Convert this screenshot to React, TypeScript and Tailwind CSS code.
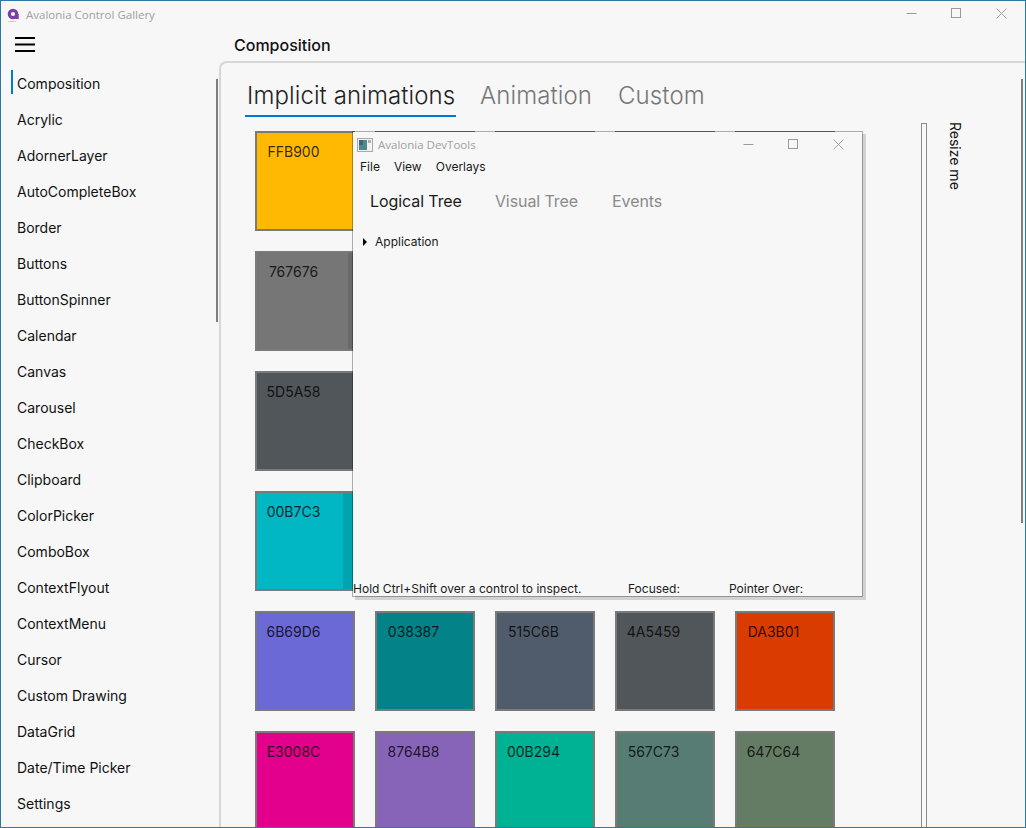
import React from "react";

const navItems = [
  "Composition",
  "Acrylic",
  "AdornerLayer",
  "AutoCompleteBox",
  "Border",
  "Buttons",
  "ButtonSpinner",
  "Calendar",
  "Canvas",
  "Carousel",
  "CheckBox",
  "Clipboard",
  "ColorPicker",
  "ComboBox",
  "ContextFlyout",
  "ContextMenu",
  "Cursor",
  "Custom Drawing",
  "DataGrid",
  "Date/Time Picker",
  "Settings",
];

type Swatch = { label: string; fill: string; strip?: string };

// the empty labels sit under the DevTools window
const swatches: Swatch[] = [
  { label: "FFB900", fill: "bg-[#ffb900]" },
  { label: "", fill: "bg-[#e74856]" },
  { label: "", fill: "bg-[#0078d7]" },
  { label: "", fill: "bg-[#0099bc]" },
  { label: "", fill: "bg-[#7a7574]" },
  { label: "767676", fill: "bg-[#767676]", strip: "w-[5px]" },
  { label: "", fill: "bg-[#ff8c00]" },
  { label: "", fill: "bg-[#e81123]" },
  { label: "", fill: "bg-[#0063b1]" },
  { label: "", fill: "bg-[#2d7d9a]" },
  { label: "5D5A58", fill: "bg-[#50565a]" },
  { label: "", fill: "bg-[#f7630c]" },
  { label: "", fill: "bg-[#ea005e]" },
  { label: "", fill: "bg-[#8e8cd8]" },
  { label: "", fill: "bg-[#00b7c3]" },
  { label: "00B7C3", fill: "bg-[#00b7c3]", strip: "w-[10px]" },
  { label: "", fill: "bg-[#ca5010]" },
  { label: "", fill: "bg-[#c30052]" },
  { label: "", fill: "bg-[#0078d7]" },
  { label: "", fill: "bg-[#038387]" },
  { label: "6B69D6", fill: "bg-[#6b69d6]" },
  { label: "038387", fill: "bg-[#038387]" },
  { label: "515C6B", fill: "bg-[#505c6b]" },
  { label: "4A5459", fill: "bg-[#505659]" },
  { label: "DA3B01", fill: "bg-[#da3b01]" },
  { label: "E3008C", fill: "bg-[#e3008c]" },
  { label: "8764B8", fill: "bg-[#8764b8]" },
  { label: "00B294", fill: "bg-[#00b294]" },
  { label: "567C73", fill: "bg-[#567c73]" },
  { label: "647C64", fill: "bg-[#647c64]" },
];

// what shows through along the top edge of the window
const topEdge = [
  { w: "w-[520px]", c: "bg-transparent" },
  { w: "w-[20px]", c: "bg-[#b0aca8]" },
  { w: "w-[116px]", c: "bg-transparent" },
  { w: "w-[15px]", c: "bg-[#c9a868]" },
  { w: "w-[2px]", c: "bg-[#3030b0]" },
  { w: "w-[18px]", c: "bg-[#c4c0c0]" },
  { w: "w-[39px]", c: "bg-transparent" },
  { w: "w-[19px]", c: "bg-[#b4b0ac]" },
  { w: "w-[51px]", c: "bg-transparent" },
  { w: "w-[15px]", c: "bg-[#cfa46c]" },
  { w: "w-[11px]", c: "bg-[#b4b0ac]" },
];

const CaptionButtons: React.FC<{ gap: string }> = ({ gap }) => (
  <div className={`flex items-center ${gap}`}>
    <svg width="11" height="11" viewBox="0 0 11 11" className="text-[#9a9a9a]">
      <path d="M0.5 5.5H10.5" stroke="currentColor" fill="none" />
    </svg>
    <svg width="11" height="11" viewBox="0 0 11 11" className="text-[#9a9a9a]">
      <rect x="0.5" y="0.5" width="9" height="9" stroke="currentColor" fill="none" />
    </svg>
    <svg width="11" height="11" viewBox="0 0 11 11" className="text-[#9a9a9a]">
      <path d="M0.5 0.5L10.5 10.5M10.5 0.5L0.5 10.5" stroke="currentColor" fill="none" strokeWidth="0.9" />
    </svg>
  </div>
);

const DevTools: React.FC = () => (
  <div className="absolute left-[351px] top-[130px] w-[511px] h-[466px] flex flex-col border border-black/30 bg-[#f7f7f7] bg-clip-padding shadow-[3px_3px_0_#d2d2d2] font-['Inter',sans-serif] text-[12px] text-[#1a1a1a]">
    <div className="h-[25px] shrink-0 flex items-center pl-[4px] pr-[18px]">
      <svg width="16" height="14" viewBox="0 0 16 14" className="shrink-0">
        <rect x="0.5" y="0.5" width="15" height="13" fill="#f2f2f2" stroke="#a8a8a8" />
        <rect x="2" y="2" width="8" height="10" fill="#4d8a8c" />
        <rect x="2" y="2" width="4" height="5" fill="#45607a" />
        <rect x="11" y="2" width="3" height="3" fill="#9fb4b8" />
      </svg>
      <span className="ml-[5px] font-['Open_Sans',sans-serif] text-[11.5px] text-[#a0a0a0]">Avalonia DevTools</span>
      <div className="ml-auto">
        <CaptionButtons gap="gap-[34px]" />
      </div>
    </div>
    <div className="h-[20px] shrink-0 flex items-center pl-[7px] gap-[14px]">
      <span>File</span>
      <span>View</span>
      <span>Overlays</span>
    </div>
    <div className="h-[48px] shrink-0 flex items-center pl-[17px] text-[16px] tracking-[-0.08px] text-[#8a8a8a]">
      <span className="text-[#1a1a1a]">Logical Tree</span>
      <span className="ml-[33px]">Visual Tree</span>
      <span className="ml-[34px]">Events</span>
    </div>
    <div className="h-[34px] shrink-0 flex items-center pl-[10px]">
      <svg width="4" height="8" viewBox="0 0 4 8" className="shrink-0">
        <path d="M0 0L4 4L0 8Z" fill="#000" />
      </svg>
      <span className="ml-[8px]">Application</span>
    </div>
    <div className="flex-1" />
    <div className="h-[14px] shrink-0 flex items-center">
      <span className="w-[275px] tracking-[0.02px]">Hold Ctrl+Shift over a control to inspect.</span>
      <span className="w-[101px]">Focused:</span>
      <span>Pointer Over:</span>
    </div>
  </div>
);

const App: React.FC = () => {
  return (
    <div className="relative w-[1026px] h-[828px] overflow-hidden flex flex-col border border-[#2a78a8] bg-[#f7f7f7] font-['Inter',sans-serif] text-[#111]">
      <div className="absolute top-[-1px] left-0 flex h-[1px]">
        {topEdge.map((s, i) => (
          <div key={i} className={`${s.w} ${s.c}`} />
        ))}
      </div>

      <div className="h-[27px] shrink-0 flex items-center pl-[6px] pr-[18px]">
        <svg width="14" height="14" viewBox="0 0 14 14" className="shrink-0">
          <circle cx="6" cy="6" r="3.7" fill="none" stroke="#7b3fa6" strokeWidth="3.2" />
          <rect x="8.5" y="6" width="3.2" height="5" fill="#7b3fa6" />
          <path d="M1 13.5H9" stroke="#d0d0d0" fill="none" />
        </svg>
        <span className="ml-[5px] font-['Open_Sans',sans-serif] text-[11.5px] text-[#a0a0a0]">Avalonia Control Gallery</span>
        <div className="ml-auto mb-[2px]">
          <CaptionButtons gap="gap-[34px]" />
        </div>
      </div>

      <div className="flex-1 min-h-0 flex">
        <nav className="w-[218px] shrink-0 flex flex-col">
          <div className="h-[37px] shrink-0 flex items-start pt-[9px] pl-[14px]">
            <svg width="20" height="15" viewBox="0 0 20 15">
              <path d="M0 1H20M0 7.5H20M0 14H20" stroke="#000" strokeWidth="2" fill="none" />
            </svg>
          </div>
          {navItems.map((item, i) => (
            <div key={item} className="relative h-[36px] shrink-0 flex items-center pl-[16px] text-[14px]">
              {i === 0 && <div className="absolute left-[10px] top-[5px] w-[2px] h-[24px] bg-[#0078d4]" />}
              {item}
            </div>
          ))}
        </nav>

        <main className="flex-1 min-w-0 flex flex-col">
          <div className="h-[33px] shrink-0 flex items-center pl-[15px] text-[16px] font-medium">Composition</div>
          <section className="flex-1 min-h-0 flex flex-col border-l-2 border-t-2 border-[#d6d6d6] rounded-tl-[8px]">
            <div className="h-[54px] shrink-0 flex items-end pl-[24px]">
              <div className="flex items-end text-[24px] font-light tracking-[0.1px] text-[#767676]">
                <span className="h-[39px] px-[2px] w-[211px] whitespace-nowrap border-b-2 border-[#0078d4] text-[#222]">Implicit animations</span>
                <span className="h-[39px] ml-[24px]">Animation</span>
                <span className="h-[39px] ml-[26px]">Custom</span>
              </div>
            </div>
            <div className="flex-1 min-h-0 flex overflow-hidden pt-[6px]">
              <div className="ml-[34px] mt-[8px] grid grid-cols-[repeat(5,100px)] auto-rows-[100px] gap-[20px] w-[580px] shrink-0">
                {swatches.map((s, i) => (
                  <div key={i} className={`relative border-2 border-[#7a7a7a] ${s.fill}`}>
                    {s.strip && <div className={`absolute inset-y-0 right-0 bg-black/10 ${s.strip}`} />}
                    <div className="relative w-[73px] pt-[9px] text-center text-[14px] leading-[20px] text-black/80">{s.label}</div>
                  </div>
                ))}
              </div>
              <div className="ml-[86px] w-[6px] shrink-0 border border-b-0 border-[#8a8a8a]" />
              <div className="ml-[21px] -mt-[1px] text-[14px] leading-[14px] [writing-mode:vertical-rl] whitespace-nowrap text-[#111]">Resize me</div>
            </div>
          </section>
        </main>
      </div>

      <DevTools />

      <div className="absolute left-[215px] top-[78px] w-[2px] h-[243px] bg-[#7f7f7f]" />
      <div className="absolute left-[1020px] top-[78px] w-[2px] h-[444px] bg-[#7f7f7f]" />
    </div>
  );
};

export default App;
